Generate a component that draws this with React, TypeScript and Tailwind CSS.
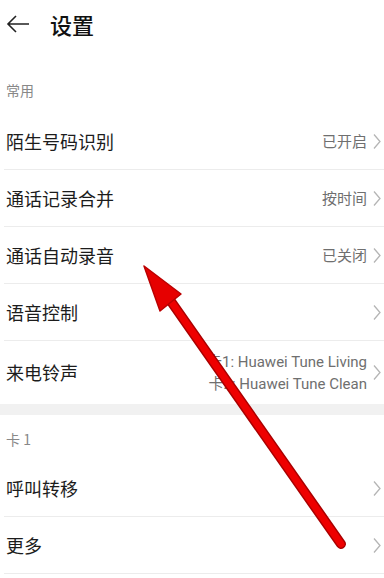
import { ReactNode } from 'react';

type Row = {
  label: string;
  value?: ReactNode;
  last?: boolean;
};

const cjk = { fontFamily: '"Noto Sans CJK SC", "Noto Sans", sans-serif' };

function Chevron() {
  return (
    <svg width="8" height="17" viewBox="0 0 8 17" className="shrink-0">
      <path d="M1 1.5 L7 8.5 L1 15.5" fill="none" stroke="#b5b5b5" strokeWidth="1.3" />
    </svg>
  );
}

function SettingRow({ label, value, last }: Row) {
  return (
    <div className={`ml-[4px] flex h-[57px] items-center justify-between pr-[3px] ${last ? '' : 'border-b border-[#ececec]'}`}>
      <span className="pl-[2px] text-[18px] text-[#1c1c1c]">{label}</span>
      <div className="flex items-center gap-[6px]">
        {value && <span className="text-[15px] text-[#6f6f6f]">{value}</span>}
        <Chevron />
      </div>
    </div>
  );
}

export default function App() {
  return (
    <div className="relative h-[578px] w-[384px] overflow-hidden bg-white" style={cjk}>
      <header className="flex h-[48px] items-center gap-[20px] pl-[6px]">
        <svg width="24" height="20" viewBox="0 0 24 20">
          <path d="M10 2 L2 10 L10 18 M2 10 L23 10" fill="none" stroke="#222" strokeWidth="1.6" />
        </svg>
        <h1 className="text-[22px] font-medium text-[#111]">设置</h1>
      </header>

      <div className="flex h-[65px] items-end pb-[12px] pl-[6px] text-[14px] text-[#888]">常用</div>
      <SettingRow label="陌生号码识别" value="已开启" />
      <SettingRow label="通话记录合并" value="按时间" />
      <SettingRow label="通话自动录音" value="已关闭" />
      <SettingRow label="语音控制" />
      <div className="ml-[4px] flex h-[63px] items-center justify-between pr-[3px]">
        <span className="pl-[2px] text-[18px] text-[#1c1c1c]">来电铃声</span>
        <div className="flex items-center gap-[6px]">
          <div className="flex flex-col items-end text-[15px] leading-[22px] text-[#6f6f6f]" style={{ fontFamily: 'Roboto, "Noto Sans CJK SC", sans-serif' }}>
            <span>卡1: Huawei Tune Living</span>
            <span>卡2: Huawei Tune Clean</span>
          </div>
          <Chevron />
        </div>
      </div>
      <div className="h-[11px] bg-[#f1f1f1]" />

      <div className="flex h-[45px] items-end pb-[10px] pl-[6px] text-[14px] text-[#888]">卡 1</div>
      <SettingRow label="呼叫转移" />
      <SettingRow label="更多" />

      {/* red annotation arrow */}
      <svg className="pointer-events-none absolute left-0 top-0" width="384" height="578" viewBox="0 0 384 578">
        <line x1="170" y1="300" x2="341" y2="544" stroke="#a00" strokeWidth="10" strokeLinecap="round" />
        <line x1="170" y1="300" x2="341" y2="544" stroke="#e00" strokeWidth="7" strokeLinecap="round" />
        <polygon points="144,266 181,294 160,311" fill="#e60000" stroke="#b00" strokeWidth="1.5" strokeLinejoin="round" />
      </svg>
    </div>
  );
}
